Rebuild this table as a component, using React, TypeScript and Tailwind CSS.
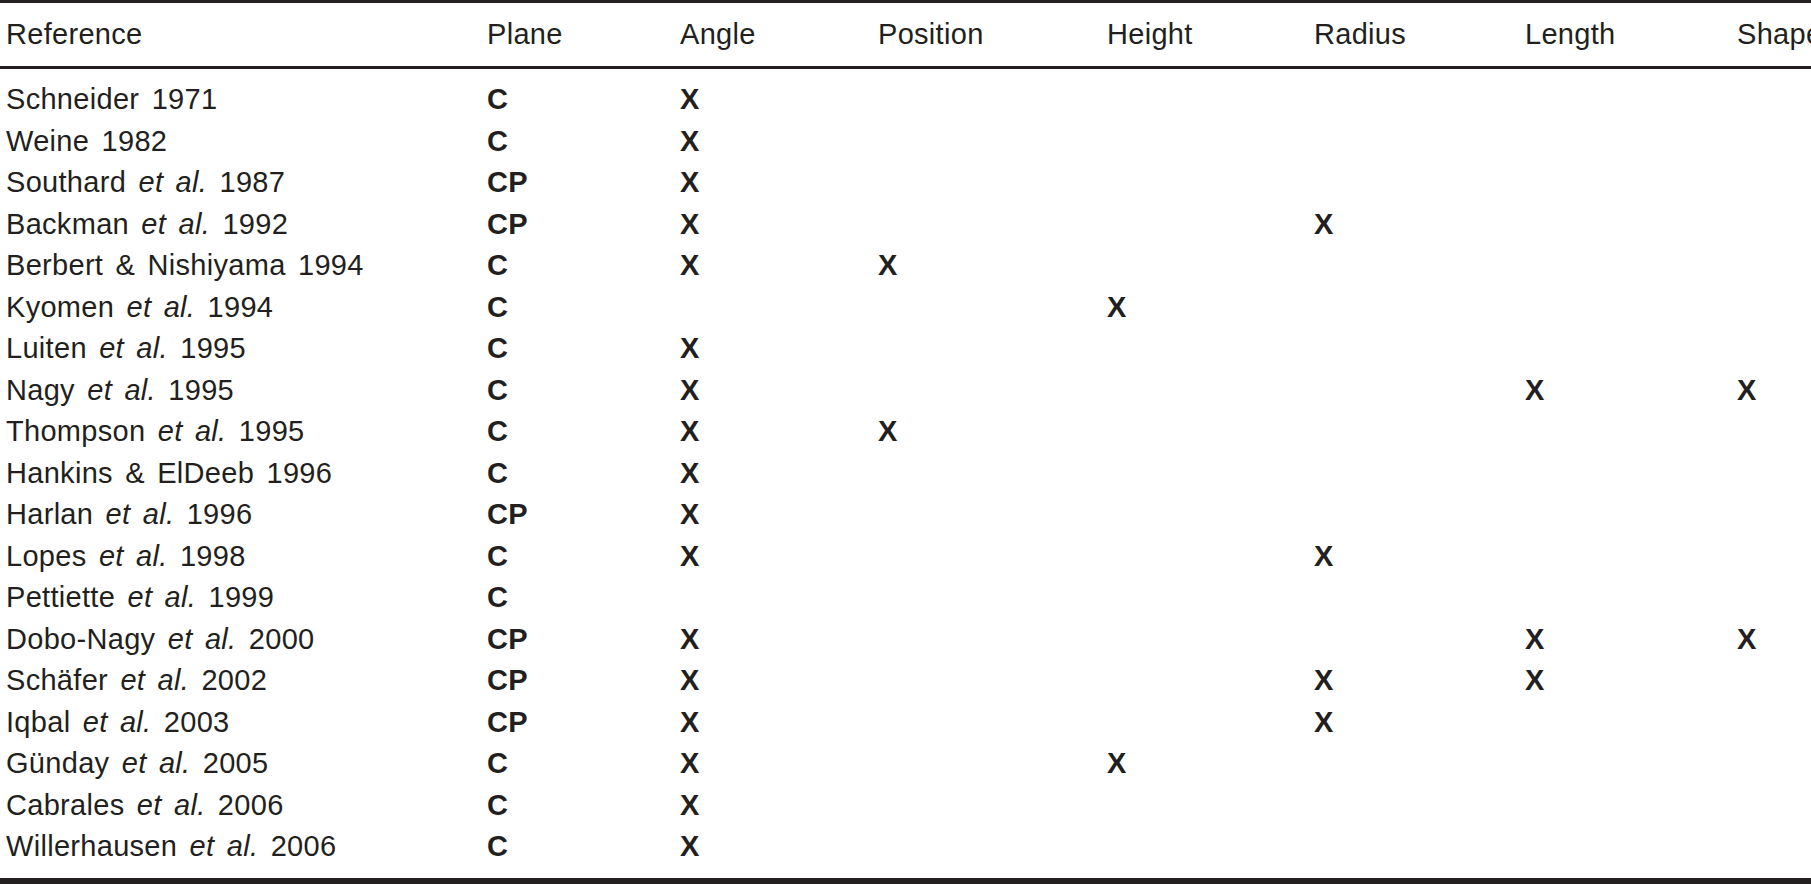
import React from 'react';

type Row = {
  name: string;
  etal?: boolean;
  year: string;
  plane: string;
  marks: string[];
};

const rows: Row[] = [
  { name: 'Schneider', year: '1971', plane: 'C', marks: ['angle'] },
  { name: 'Weine', year: '1982', plane: 'C', marks: ['angle'] },
  { name: 'Southard', etal: true, year: '1987', plane: 'CP', marks: ['angle'] },
  { name: 'Backman', etal: true, year: '1992', plane: 'CP', marks: ['angle', 'radius'] },
  { name: 'Berbert & Nishiyama', year: '1994', plane: 'C', marks: ['angle', 'position'] },
  { name: 'Kyomen', etal: true, year: '1994', plane: 'C', marks: ['height'] },
  { name: 'Luiten', etal: true, year: '1995', plane: 'C', marks: ['angle'] },
  { name: 'Nagy', etal: true, year: '1995', plane: 'C', marks: ['angle', 'length', 'shape'] },
  { name: 'Thompson', etal: true, year: '1995', plane: 'C', marks: ['angle', 'position'] },
  { name: 'Hankins & ElDeeb', year: '1996', plane: 'C', marks: ['angle'] },
  { name: 'Harlan', etal: true, year: '1996', plane: 'CP', marks: ['angle'] },
  { name: 'Lopes', etal: true, year: '1998', plane: 'C', marks: ['angle', 'radius'] },
  { name: 'Pettiette', etal: true, year: '1999', plane: 'C', marks: [] },
  { name: 'Dobo-Nagy', etal: true, year: '2000', plane: 'CP', marks: ['angle', 'length', 'shape'] },
  { name: 'Schäfer', etal: true, year: '2002', plane: 'CP', marks: ['angle', 'radius', 'length'] },
  { name: 'Iqbal', etal: true, year: '2003', plane: 'CP', marks: ['angle', 'radius'] },
  { name: 'Günday', etal: true, year: '2005', plane: 'C', marks: ['angle', 'height'] },
  { name: 'Cabrales', etal: true, year: '2006', plane: 'C', marks: ['angle'] },
  { name: 'Willerhausen', etal: true, year: '2006', plane: 'C', marks: ['angle'] },
];

const markCols = ['angle', 'position', 'height', 'radius', 'length', 'shape'];
const grid = 'grid grid-cols-[481px_193px_198px_229px_207px_211px_212px_160px]';

export default function App() {
  return (
    <div className="w-[1811px] h-[884px] overflow-hidden bg-white text-[#231f20] font-['Liberation_Sans',Arial,sans-serif] text-[29px] leading-[41.5px] tracking-[0.3px] [word-spacing:4px]">
      <div className="w-[1950px] border-t-[3px] border-b-[6px] border-[#231f20]">
        {/* Header */}
        <div className={`${grid} pl-[6px] pt-[11px] pb-[10.5px] border-b-[3px] border-[#231f20]`}>
          <div>Reference</div>
          <div>Plane</div>
          <div>Angle</div>
          <div>Position</div>
          <div>Height</div>
          <div>Radius</div>
          <div>Length</div>
          <div>Shape</div>
        </div>

        {/* Body */}
        <div className="pt-[10px] pb-[10px]">
          {rows.map((row, i) => (
            <div key={i} className={`${grid} pl-[6px]`}>
              <div className="whitespace-nowrap">
                {row.name} {row.etal && <><i>et al.</i> </>}{row.year}
              </div>
              <div className="font-bold">{row.plane}</div>
              {markCols.map((col) => (
                <div key={col} className="font-bold">
                  {row.marks.includes(col) ? 'X' : ''}
                </div>
              ))}
            </div>
          ))}
        </div>
      </div>
    </div>
  );
}
